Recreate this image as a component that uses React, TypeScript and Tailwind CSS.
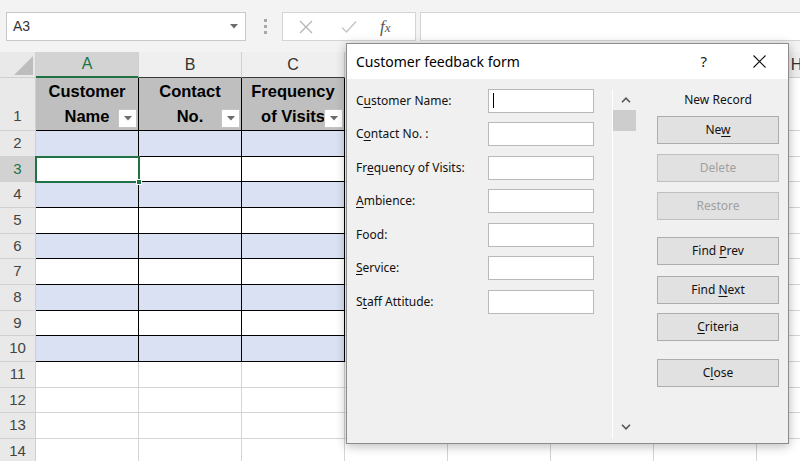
import React from 'react';

const COLS = ['A', 'B', 'C', 'D', 'E', 'F', 'G', 'H'];
const ROWS = [2, 3, 4, 5, 6, 7, 8, 9, 10, 11, 12, 13, 14];

const FIELDS: { pre: string; key: string; post: string }[] = [
    { pre: 'C', key: 'u', post: 'stomer Name:' },
    { pre: 'C', key: 'o', post: 'ntact No. :' },
    { pre: 'Fr', key: 'e', post: 'quency of Visits:' },
    { pre: '', key: 'A', post: 'mbience:' },
    { pre: 'Food:', key: '', post: '' },
    { pre: '', key: 'S', post: 'ervice:' },
    { pre: 'S', key: 't', post: 'aff Attitude:' },
];

const FilterButton = () => (
    <div className="absolute right-[1px] bottom-[2px] w-[19px] h-[19px] bg-white border border-[#c4c4c4] flex items-center justify-center">
        <svg width="8" height="5" viewBox="0 0 8 5">
            <path d="M0 0h8L4 4.5z" fill="#6b6b6b" />
        </svg>
    </div>
);

const Chevron = ({ down }: { down?: boolean }) => (
    <svg width="10" height="6" viewBox="0 0 10 6" className={down ? 'rotate-180' : ''}>
        <path d="M1 5.2L5 1.2l4 4" fill="none" stroke="#555" strokeWidth="1.6" />
    </svg>
);

const Btn = ({ children, disabled, className = '' }: { children: React.ReactNode; disabled?: boolean; className?: string }) => (
    <div
        className={`h-[28px] w-[122px] bg-[#e1e1e1] border flex items-center justify-center text-[12px] ${
            disabled ? 'border-[#bfbfbf] text-[#a0a0a0]' : 'border-[#adadad] text-[#111]'
        } ${className}`}
    >
        <span className="whitespace-pre">{children}</span>
    </div>
);

export default function App() {
    return (
        <div className="relative w-[800px] h-[461px] overflow-hidden bg-white font-['Liberation_Sans',Arial,sans-serif]">
            {/* formula bar */}
            <div className="h-[52px] bg-[#f3f3f3] flex items-start pt-[12px]">
                <div className="ml-[6px] w-[240px] h-[29px] shrink-0 bg-white border border-[#c8c8c8] flex items-center pl-[6px] text-[14px] text-[#333]">
                    A3
                    <svg width="8" height="5" viewBox="0 0 8 5" className="ml-auto mr-[7px]">
                        <path d="M0 0h8L4 4.5z" fill="#6b6b6b" />
                    </svg>
                </div>
                <div className="ml-[18px] mt-[7px] flex flex-col gap-[3px]">
                    <span className="w-[3px] h-[3px] bg-[#a8a8a8]" />
                    <span className="w-[3px] h-[3px] bg-[#a8a8a8]" />
                    <span className="w-[3px] h-[3px] bg-[#a8a8a8]" />
                </div>
                <div className="ml-[15px] w-[134px] h-[29px] shrink-0 bg-white border border-[#d4d4d4] flex items-center">
                    <svg width="14" height="14" viewBox="0 0 14 14" className="ml-[16px]">
                        <path d="M1 1l12 12M13 1L1 13" stroke="#b5b5b5" strokeWidth="1.3" />
                    </svg>
                    <svg width="16" height="14" viewBox="0 0 16 14" className="ml-[28px]">
                        <path d="M1 7.5l4.5 4.5L15 1.5" fill="none" stroke="#c4c4c4" strokeWidth="1.4" />
                    </svg>
                    <span className="ml-[23px] text-[17px] italic font-['Liberation_Serif',serif] text-[#555]">
                        f<span className="text-[13px]">x</span>
                    </span>
                </div>
                <div className="ml-[4px] flex-1 h-[29px] bg-white border border-[#d4d4d4] mr-[-4px]" />
            </div>

            {/* column headers (D–G sit under the dialog) */}
            <div className="flex h-[26px]">
                <div className="w-[36px] shrink-0 bg-[#e9e9e9] border-r border-b border-[#d0d0d0] flex items-end justify-end pr-[2px] pb-[2px]">
                    <svg width="19" height="19" viewBox="0 0 19 19">
                        <path d="M19 0v19H0z" fill="#bdbdbd" />
                    </svg>
                </div>
                {COLS.map((c, i) => (
                    <div
                        key={c}
                        className={`${i === 7 ? 'w-[80px]' : 'w-[103px]'} shrink-0 border-r border-[#d0d0d0] flex items-center justify-center text-[16px] ${
                            i === 0
                                ? 'bg-[#d3d3d3] text-[#217346] border-b-2 border-b-[#217346]'
                                : i < 3
                                ? 'bg-[#efefef] text-[#333] border-b border-b-[#3a3a3a]'
                                : 'bg-[#efefef] text-[#333] border-b border-b-[#d0d0d0]'
                        }`}
                    >
                        {i < 3 || i === 7 ? c : null}
                    </div>
                ))}
            </div>

            {/* row 1 */}
            <div className="flex h-[53px]">
                <div className="w-[36px] shrink-0 bg-[#e9e9e9] border-r border-b border-[#d0d0d0] flex items-end justify-center pb-[3px] text-[15px] text-[#444]">
                    1
                </div>
                {[
                    ['Customer', 'Name'],
                    ['Contact', 'No.'],
                    ['Frequency', 'of Visits'],
                ].map(([a, b]) => (
                    <div
                        key={a}
                        className="relative w-[103px] shrink-0 bg-[#bfbfbf] border-r border-b border-black flex flex-col justify-end items-center pb-[1px] text-[16.5px] font-bold leading-[25px] text-black overflow-hidden whitespace-nowrap"
                    >
                        <span>{a}</span>
                        <span>{b}</span>
                        <FilterButton />
                    </div>
                ))}
                {COLS.slice(3).map((c, i) => (
                    <div key={c} className={`${i === 4 ? 'w-[80px]' : 'w-[103px]'} shrink-0 border-r border-b border-[#d4d4d4]`} />
                ))}
            </div>

            {/* rows 2-14 */}
            {ROWS.map((r) => {
                const inTable = r <= 10;
                const band = inTable && r % 2 === 0;
                return (
                    <div key={r} className="flex h-[25.67px]">
                        <div
                            className={`w-[36px] shrink-0 border-r border-b border-[#d0d0d0] flex items-center justify-center text-[15px] ${
                                r === 3 ? 'bg-[#d2d2d2] text-[#217346]' : 'bg-[#e9e9e9] text-[#444]'
                            }`}
                        >
                            {r}
                        </div>
                        {COLS.map((c, i) => (
                            <div
                                key={c}
                                className={`relative ${i === 7 ? 'w-[80px]' : 'w-[103px]'} shrink-0 border-r border-b ${
                                    inTable && i < 3 ? 'border-black' : 'border-[#d4d4d4]'
                                } ${band && i < 3 ? 'bg-[#d9e1f2]' : 'bg-white'} ${r === 3 && i === 0 ? 'z-10' : ''}`}
                            >
                                {r === 3 && i === 0 && (
                                    <div className="absolute -left-[1px] -top-[1px] w-[105px] h-[27px] border-2 border-[#217346]">
                                        <div className="absolute -right-[4px] -bottom-[4px] w-[6px] h-[6px] bg-[#217346] border border-white" />
                                    </div>
                                )}
                            </div>
                        ))}
                    </div>
                );
            })}

            {/* data form dialog */}
            <div className="absolute z-20 left-[346px] top-[43px] w-[443px] h-[401px] border border-[#8c8c8c] bg-[#f0f0f0] shadow-[0_2px_10px_rgba(0,0,0,0.28)] flex flex-col font-['Noto_Sans',sans-serif] text-[#111]">
                <div className="h-[35px] shrink-0 bg-white flex items-center pl-[9px]">
                    <span className="text-[14px] text-black">Customer feedback form</span>
                    <span className="ml-auto text-[15px] text-[#222]">?</span>
                    <svg width="13" height="13" viewBox="0 0 13 13" className="ml-[46px] mr-[22px]">
                        <path d="M0.5 0.5l12 12M12.5 0.5l-12 12" stroke="#111" strokeWidth="1.1" />
                    </svg>
                </div>

                <div className="flex flex-1">
                    {/* fields */}
                    <div className="w-[265px] shrink-0 pl-[9px] pt-[5px]">
                        {FIELDS.map((f, i) => (
                            <div key={i} className="h-[33.5px] flex items-center">
                                <span className="w-[132px] shrink-0 text-[12px] whitespace-nowrap">
                                    {f.pre}
                                    {f.key && <u className="underline-offset-2">{f.key}</u>}
                                    {f.post}
                                </span>
                                <div className="w-[106px] h-[24px] bg-white border border-[#b9b9b9] flex items-center">
                                    {i === 0 && <span className="ml-[4px] w-px h-[15px] bg-black" />}
                                </div>
                            </div>
                        ))}
                    </div>

                    <div className="w-px shrink-0 bg-white mt-[11px] mb-[5px]" />

                    {/* scroll bar */}
                    <div className="w-[23px] shrink-0 flex flex-col pt-[11px] pb-[6px]">
                        <div className="h-[20px] flex items-center justify-center pl-[2px]">
                            <Chevron />
                        </div>
                        <div className="h-[21px] bg-[#cdcdcd]" />
                        <div className="flex-1" />
                        <div className="h-[20px] flex items-center justify-center pl-[2px]">
                            <Chevron down />
                        </div>
                    </div>

                    {/* buttons */}
                    <div className="pl-[21px] pt-[13px] flex flex-col">
                        <div className="h-[16px] leading-[16px] text-center text-[12px]">New Record</div>
                        <Btn className="mt-[8px]">
                            Ne<u className="underline-offset-2">w</u>
                        </Btn>
                        <Btn disabled className="mt-[10px]">Delete</Btn>
                        <Btn disabled className="mt-[10px]">Restore</Btn>
                        <Btn className="mt-[17px]">
                            {'Find '}
                            <u className="underline-offset-2">P</u>rev
                        </Btn>
                        <Btn className="mt-[11px]">
                            {'Find '}
                            <u className="underline-offset-2">N</u>ext
                        </Btn>
                        <Btn className="mt-[9px]">
                            <u className="underline-offset-2">C</u>riteria
                        </Btn>
                        <Btn className="mt-[18px]">
                            C<u className="underline-offset-2">l</u>ose
                        </Btn>
                    </div>
                </div>
            </div>
        </div>
    );
}
